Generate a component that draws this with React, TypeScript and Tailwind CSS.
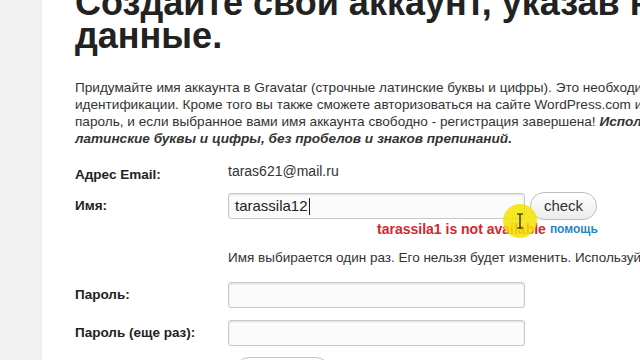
import React from "react"

function Field({ value, withCaret }: { value?: string; withCaret?: boolean }) {
  return (
    <div className="w-[297px] h-[26px] border border-[#c9c9c9] rounded-[3px] bg-[#fbfbfb] shadow-[inset_0_1px_2px_rgba(0,0,0,0.12)] flex items-center px-[6px] text-[15px] text-[#222]">
      {value}
      {withCaret && <span className="w-px h-[17px] bg-[#222] ml-px" />}
    </div>
  )
}

export default function App() {
  return (
    <div className="w-[640px] h-[360px] overflow-hidden flex bg-white text-[#333] font-['Liberation_Sans',Arial,sans-serif]">
      <div className="w-[42px] shrink-0 bg-[#f1f1f1] border-r border-[#ececec]" />

      <main className="relative flex-1 pl-[33px] flex flex-col">
        <h1 className="mt-[-14px] text-[36px] leading-[33px] font-bold text-[#222] whitespace-nowrap">
          <div>Создайте свой аккаунт, указав необходимые</div>
          <div>данные.</div>
        </h1>

        <div className="mt-[27px] text-[13.6px] leading-[17px] text-[#333] whitespace-nowrap">
          <div>Придумайте имя аккаунта в Gravatar (строчные латинские буквы и цифры). Это необходимо для вашей</div>
          <div>идентификации. Кроме того вы также сможете авторизоваться на сайте WordPress.com и в других</div>
          <div>пароль, и если выбранное вами имя аккаунта свободно - регистрация завершена! <b className="italic">Используйте только</b></div>
          <div className="font-bold italic">латинские буквы и цифры, без пробелов и знаков препинаний.</div>
        </div>

        <div className="mt-[15px] h-[26px] flex items-center">
          <div className="w-[153px] shrink-0 font-bold text-[13.5px] text-[#222]">Адрес Email:</div>
          <div className="mb-[8px] text-[14px] text-[#333]">taras621@mail.ru</div>
        </div>

        <div className="mt-[4px] h-[28px] flex items-center">
          <div className="w-[153px] shrink-0 font-bold text-[13.5px] text-[#222]">Имя:</div>
          <Field value="tarassila12" withCaret />
          <button className="ml-[5px] w-[67px] h-[28px] rounded-full border border-[#bdbdbd] bg-gradient-to-b from-white to-[#ececec] text-[15px] text-[#333]">
            check
          </button>
        </div>

        <div className="mt-[1px] h-[16px] flex items-center pl-[302px] whitespace-nowrap">
          <span className="text-[14px] font-bold text-[#d6262b]">tarassila1 is not available</span>
          <span className="ml-[4px] text-[12px] font-bold text-[#2a86c5]">помощь</span>
        </div>

        <div className="mt-[13px] h-[16px] pl-[153px] text-[13.5px] leading-[16px] whitespace-nowrap text-[#333]">
          Имя выбирается один раз. Его нельзя будет изменить. Используйте
        </div>

        <div className="mt-[16px] h-[26px] flex items-center">
          <div className="w-[153px] shrink-0 font-bold text-[13.5px] text-[#222]">Пароль:</div>
          <Field />
        </div>

        <div className="mt-[12px] h-[26px] flex items-center">
          <div className="w-[153px] shrink-0 font-bold text-[13.5px] text-[#222] whitespace-nowrap">Пароль (еще раз):</div>
          <Field />
        </div>

        <div className="mt-[11px] pl-[160px]">
          <div className="w-[95px] h-[28px] rounded-full border border-[#c4c4c4] bg-gradient-to-b from-white to-[#f0f0f0]" />
        </div>

        {/* cursor highlight */}
        <div className="absolute left-[461px] top-[204px] w-[34px] h-[34px] rounded-full bg-[#f5e300]/85 pointer-events-none" />
        <svg className="absolute left-[474px] top-[213px] pointer-events-none" width="8" height="16" viewBox="0 0 8 16">
          <path d="M1 1h6M4 1v14M1 15h6" stroke="#111" strokeWidth="1.2" fill="none" />
        </svg>
      </main>
    </div>
  )
}
